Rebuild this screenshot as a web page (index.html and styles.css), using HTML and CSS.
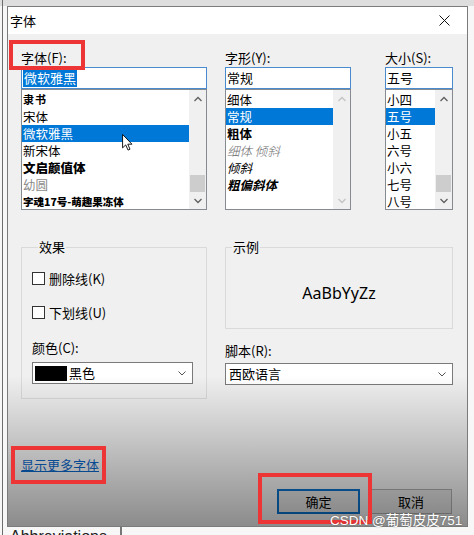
FILE: index.html
```html
<!DOCTYPE html>
<html lang="zh-CN">
<head>
    <meta charset="UTF-8">
    <title>字体</title>
    <link rel="stylesheet" href="styles.css">
</head>
<body>
<div class="dialog">
    <div class="titlebar">
        <span class="title">字体</span>
        <span class="close">
            <svg viewBox="0 0 11 11"><path d="M0.5 0.5l10 10M10.5 0.5l-10 10"/></svg>
        </span>
    </div>
    <div class="dialog-body">
        <div class="pickers">
            <div class="picker picker-font">
                <div class="field-label">字体(F):</div>
                <div class="text-input"><span class="selected-text">微软雅黑</span></div>
                <div class="list">
                    <div class="list-items">
                        <div class="item font-lishu">隶书</div>
                        <div class="item">宋体</div>
                        <div class="item selected">微软雅黑</div>
                        <div class="item">新宋体</div>
                        <div class="item font-heavy">文启颜值体</div>
                        <div class="item font-light">幼圆</div>
                        <div class="item font-fancy">字魂17号-萌趣果冻体</div>
                    </div>
                    <div class="scrollbar">
                        <div class="sb-btn"><svg viewBox="0 0 8 6"><path d="M0.5 5L4 1.5L7.5 5"/></svg></div>
                        <div class="sb-track"><div class="sb-thumb"></div></div>
                        <div class="sb-btn"><svg viewBox="0 0 8 6"><path d="M0.5 1L4 4.5L7.5 1"/></svg></div>
                    </div>
                </div>
            </div>
            <div class="picker picker-style">
                <div class="field-label">字形(Y):</div>
                <div class="text-input">常规</div>
                <div class="list">
                    <div class="list-items">
                        <div class="item">细体</div>
                        <div class="item selected">常规</div>
                        <div class="item style-bold">粗体</div>
                        <div class="item style-light-italic">细体 倾斜</div>
                        <div class="item style-italic">倾斜</div>
                        <div class="item style-bold-italic">粗偏斜体</div>
                    </div>
                    <div class="scrollbar disabled">
                        <div class="sb-btn"><svg viewBox="0 0 8 6"><path d="M0.5 5L4 1.5L7.5 5"/></svg></div>
                        <div class="sb-track"></div>
                        <div class="sb-btn"><svg viewBox="0 0 8 6"><path d="M0.5 1L4 4.5L7.5 1"/></svg></div>
                    </div>
                </div>
            </div>
            <div class="picker picker-size">
                <div class="field-label">大小(S):</div>
                <div class="text-input">五号</div>
                <div class="list">
                    <div class="list-items">
                        <div class="item">小四</div>
                        <div class="item selected">五号</div>
                        <div class="item">小五</div>
                        <div class="item">六号</div>
                        <div class="item">小六</div>
                        <div class="item">七号</div>
                        <div class="item">八号</div>
                    </div>
                    <div class="scrollbar">
                        <div class="sb-btn"><svg viewBox="0 0 8 6"><path d="M0.5 5L4 1.5L7.5 5"/></svg></div>
                        <div class="sb-track"><div class="sb-thumb"></div></div>
                        <div class="sb-btn"><svg viewBox="0 0 8 6"><path d="M0.5 1L4 4.5L7.5 1"/></svg></div>
                    </div>
                </div>
            </div>
        </div>

        <div class="options">
            <div class="group group-effects">
                <div class="group-title">效果</div>
                <div class="check-row first"><span class="checkbox"></span>删除线(K)</div>
                <div class="check-row"><span class="checkbox"></span>下划线(U)</div>
                <div class="field-label color-label">颜色(C):</div>
                <div class="select select-color">
                    <span class="swatch"></span>
                    <span class="select-text">黑色</span>
                    <svg class="chevron" viewBox="0 0 8 5"><path d="M0.5 0.5L4 4L7.5 0.5"/></svg>
                </div>
            </div>
            <div class="preview-col">
                <div class="group group-sample">
                    <div class="group-title">示例</div>
                    <div class="sample-text">AaBbYyZz</div>
                </div>
                <div class="field-label script-label">脚本(R):</div>
                <div class="select select-script">
                    <span class="select-text">西欧语言</span>
                    <svg class="chevron" viewBox="0 0 8 5"><path d="M0.5 0.5L4 4L7.5 0.5"/></svg>
                </div>
            </div>
        </div>

        <a class="more-fonts" href="#">显示更多字体</a>

        <div class="buttons">
            <button class="btn btn-default">确定</button>
            <button class="btn">取消</button>
        </div>
    </div>

    <svg class="cursor" viewBox="0 0 12 19">
        <path d="M0.5 0.5V15.5L4 12.2L6.6 18L8.8 17L6.3 11.4H11Z"/>
    </svg>
    <div class="mark mark-label"></div>
    <div class="mark mark-link"></div>
    <div class="mark mark-ok"></div>
</div>
<div class="backdrop-text">Abbreviations</div>
<div class="watermark">CSDN @葡萄皮皮751</div>
</body>
</html>
```

FILE: styles.css
```css
* {
    box-sizing: border-box;
}
body {
    margin: 0;
    height: 535px;
    overflow: hidden;
    font-family: "Noto Sans CJK SC", "Noto Sans", sans-serif;
    font-size: 13px;
    color: #000;
    background:
        linear-gradient(to right, transparent 2px, #6d6d6d 2px, #6d6d6d 3px, transparent 3px),
        linear-gradient(#dedede 0, #dedede 6px, #f7f7f7 6px);
    position: relative;
}
.dialog {
    margin: 6px 0 0 7px;
    width: 461px;
    height: 521px;
    border: 1px solid #7b7b7b;
    background: #f0f0f0;
    position: relative;
    display: flex;
    flex-direction: column;
}
.dialog::after {
    content: "";
    position: absolute;
    inset: 0;
    background: linear-gradient(to bottom, rgba(0,0,0,0) 71%, rgba(0,0,0,0.42) 100%);
    pointer-events: none;
    z-index: 1;
}
.titlebar {
    height: 27px;
    background: #fff;
    display: flex;
    align-items: center;
    justify-content: space-between;
    padding-left: 2px;
    flex-shrink: 0;
}
.title {
    line-height: 17px;
}
.close {
    width: 46px;
    height: 27px;
    display: flex;
    align-items: center;
    justify-content: center;
}
.close svg {
    width: 11px;
    height: 11px;
    stroke: #111;
    stroke-width: 1;
    fill: none;
}
.dialog-body {
    flex: 1;
    padding: 15px 14px 0 13px;
    display: flex;
    flex-direction: column;
}
.pickers {
    display: flex;
}
.picker-font { width: 186px; margin-right: 18px; }
.picker-style { width: 126px; margin-right: 34px; }
.picker-size { width: 68px; }
.field-label {
    line-height: 18px;
    height: 18px;
    white-space: nowrap;
}
.text-input {
    height: 22px;
    border: 1px solid #4a8bd0;
    background: #fff;
    padding: 0 1px;
    line-height: 20px;
    white-space: nowrap;
}
.selected-text {
    background: #0078d7;
    color: #fff;
    padding: 0 1px;
}
.list {
    height: 121px;
    border: 1px solid #868a91;
    background: #fff;
    display: flex;
}
.list-items {
    flex: 1;
    min-width: 0;
    padding-top: 1px;
}
.item {
    height: 17px;
    line-height: 17px;
    padding-left: 1px;
    font-size: 12.5px;
    white-space: nowrap;
    overflow: hidden;
}
.item.selected {
    background: #0078d7;
    color: #fff;
}
.font-lishu {
    font-size: 11px;
    font-weight: bold;
    letter-spacing: 1px;
}
.font-heavy {
    font-weight: 900;
}
.font-light {
    color: #8a8a8a;
}
.font-fancy {
    font-size: 10.5px;
    font-weight: 900;
}
.style-bold { font-weight: bold; }
.style-light-italic { font-style: italic; color: #6d6d6d; font-weight: 300; }
.style-italic { font-style: italic; }
.style-bold-italic { font-style: italic; font-weight: bold; }
.scrollbar {
    width: 17px;
    background: #f0f0f0;
    display: flex;
    flex-direction: column;
}
.sb-btn {
    height: 17px;
    display: flex;
    align-items: center;
    justify-content: center;
}
.sb-btn svg {
    width: 8px;
    height: 6px;
    fill: none;
    stroke: #606060;
    stroke-width: 1.3;
}
.scrollbar.disabled .sb-btn svg {
    stroke: #c4c4c4;
}
.sb-track {
    flex: 1;
    display: flex;
    flex-direction: column;
    justify-content: flex-end;
}
.sb-thumb {
    height: 17px;
    margin: 0 1px;
    background: #cdcdcd;
}
.options {
    display: flex;
    margin-top: 37px;
}
.group {
    border: 1px solid #dadada;
}
.group-title {
    margin: -10px 0 0 6px;
    padding: 0 1px;
    width: fit-content;
    line-height: 17px;
    background: #f0f0f0;
}
.group-effects {
    width: 186px;
    height: 152px;
    margin-right: 18px;
    padding-left: 10px;
}
.check-row {
    display: flex;
    align-items: center;
    gap: 4px;
    height: 17px;
    line-height: 17px;
    margin-top: 17px;
}
.check-row.first {
    margin-top: 15px;
}
.checkbox {
    width: 13px;
    height: 13px;
    border: 1px solid #333;
    background: #fff;
}
.color-label {
    margin-top: 18px;
}
.select {
    height: 22px;
    border: 1px solid #7a7a7a;
    background: #fff;
    display: flex;
    align-items: center;
    padding: 0 6px 0 2px;
    margin-top: 5px;
}
.select-color {
    width: 161px;
}
.swatch {
    width: 32px;
    height: 15px;
    background: #000;
    margin-right: 2px;
}
.select-text {
    flex: 1;
    line-height: 20px;
}
.chevron {
    width: 8px;
    height: 5px;
    fill: none;
    stroke: #555;
    stroke-width: 1;
}
.select-script {
    padding-left: 3px;
    margin-top: 3px;
}
.preview-col {
    width: 228px;
}
.group-sample {
    height: 82px;
}
.sample-text {
    font-family: "Noto Sans", sans-serif;
    font-size: 16px;
    line-height: 22px;
    text-align: center;
    margin-top: 27px;
}
.script-label {
    margin-top: 13px;
}
.more-fonts {
    margin-top: 57px;
    width: fit-content;
    line-height: 17px;
    color: #0a63c2;
    text-decoration: underline;
}
.buttons {
    display: flex;
    justify-content: flex-end;
    gap: 10px;
    margin: 16px 1px 0 0;
}
.btn {
    width: 82px;
    height: 25px;
    font: inherit;
    color: #000;
    background: #e1e1e1;
    border: 1px solid #adadad;
    padding: 0;
}
.btn-default {
    width: 83px;
    border: 2px solid #0a70c8;
}
.cursor {
    position: absolute;
    left: 114px;
    top: 127px;
    width: 11px;
    height: 17px;
    fill: #fff;
    stroke: #000;
    stroke-width: 1;
    stroke-linejoin: round;
}
.mark {
    position: absolute;
    border: 4px solid #ee3535;
    z-index: 2;
}
.mark-label {
    left: 1px;
    top: 33px;
    width: 76px;
    height: 30px;
}
.mark-link {
    left: 3px;
    top: 439px;
    width: 95px;
    height: 38px;
}
.mark-ok {
    left: 250px;
    top: 466px;
    width: 114px;
    height: 51px;
}
.backdrop-text {
    width: 122px;
    height: 8px;
    padding-left: 10px;
    font-family: "Liberation Sans", sans-serif;
    font-size: 16px;
    line-height: 20px;
    color: #222;
    border-right: 2px solid #777;
}
.watermark {
    position: absolute;
    left: 330px;
    top: 512px;
    font-family: "Liberation Sans", "Noto Sans CJK SC", sans-serif;
    font-size: 13.5px;
    line-height: 18px;
    color: #fff;
    text-shadow: 0 0 2px rgba(0,0,0,0.35);
    z-index: 3;
}
```
